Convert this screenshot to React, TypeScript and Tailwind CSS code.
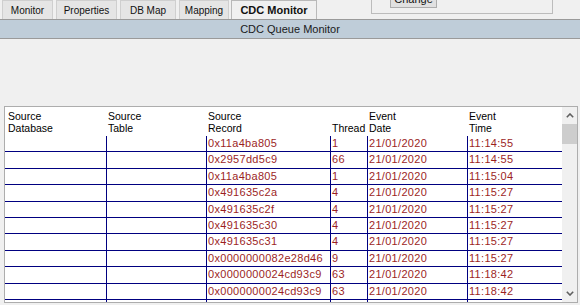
import React from "react"

type Row = { record: string; thread: string; date: string; time: string }

const ROWS: Row[] = [
  { record: "0x11a4ba805", thread: "1", date: "21/01/2020", time: "11:14:55" },
  { record: "0x2957dd5c9", thread: "66", date: "21/01/2020", time: "11:14:55" },
  { record: "0x11a4ba805", thread: "1", date: "21/01/2020", time: "11:15:04" },
  { record: "0x491635c2a", thread: "4", date: "21/01/2020", time: "11:15:27" },
  { record: "0x491635c2f", thread: "4", date: "21/01/2020", time: "11:15:27" },
  { record: "0x491635c30", thread: "4", date: "21/01/2020", time: "11:15:27" },
  { record: "0x491635c31", thread: "4", date: "21/01/2020", time: "11:15:27" },
  { record: "0x0000000082e28d46", thread: "9", date: "21/01/2020", time: "11:15:27" },
  { record: "0x0000000024cd93c9", thread: "63", date: "21/01/2020", time: "11:18:42" },
  { record: "0x0000000024cd93c9", thread: "63", date: "21/01/2020", time: "11:18:42" },
]

const COLS = "grid grid-cols-[101px_100px_124px_37px_100px_95px]"

function Chevron({ up }: { up?: boolean }) {
  return (
    <svg width="8" height="5" viewBox="0 0 8 5" className="text-[#606060]">
      <polyline
        points={up ? "0.8,4.2 4,1 7.2,4.2" : "0.8,0.8 4,4 7.2,0.8"}
        fill="none"
        stroke="currentColor"
        strokeWidth="1.6"
      />
    </svg>
  )
}

function Tab({ label, className }: { label: string; className: string }) {
  return (
    <div
      className={`h-[19px] flex items-center justify-center border-x border-t border-[#cfcfcf] bg-[#e5e5e5] text-[10px] text-[#111] ${className}`}
    >
      {label}
    </div>
  )
}

function HeaderCell({ lines, pl }: { lines: string[]; pl: string }) {
  return (
    <div className={`flex flex-col justify-end pb-[2px] leading-[12px] text-[10.5px] text-black ${pl}`}>
      {lines.map((l) => (
        <span key={l}>{l}</span>
      ))}
    </div>
  )
}

export default function App() {
  return (
    <div className="w-[580px] h-[305px] bg-[#f0f0f0] overflow-hidden flex flex-col font-['Liberation_Sans',Arial,sans-serif]">
      {/* Tab strip */}
      <div className="h-[19px] flex items-end shrink-0">
        <Tab label="Monitor" className="ml-[2px] w-[51px]" />
        <Tab label="Properties" className="ml-[3px] w-[61px]" />
        <Tab label="DB Map" className="ml-[3px] w-[56px]" />
        <Tab label="Mapping" className="ml-[3px] w-[50px]" />
        <div className="ml-[2px] w-[86px] h-[19px] flex items-center justify-center border-x border-t border-[#b9b9b9] bg-[#f0f0f0] text-[11px] font-bold text-[#111]">
          CDC Monitor
        </div>

        {/* Group box (cut off at top) */}
        <div className="ml-[54px] self-start w-[182px] h-[14px] border-x border-b border-[#bcbcbc] flex flex-col items-start overflow-hidden">
          <div className="ml-[18px] -mt-[9px] w-[47px] h-[17px] border border-[#adadad] bg-[#e1e1e1] flex items-center justify-center text-[11px] text-[#111]">
            Change
          </div>
        </div>
      </div>

      {/* Title bar */}
      <div className="h-[20px] shrink-0 border-y border-[#9a9a9a] bg-[#bfcdd9] flex items-center justify-center text-[11px] text-[#1a1a1a]">
        CDC Queue Monitor
      </div>

      {/* List */}
      <div className="mt-[67px] ml-[4px] w-[574px] h-[197px] shrink-0 border border-[#adadad] flex overflow-hidden">
        <div className="w-[557px] bg-white flex flex-col overflow-hidden">
          <div className={`${COLS} h-[29px] shrink-0`}>
            <HeaderCell lines={["Source", "Database"]} pl="pl-[3px]" />
            <HeaderCell lines={["Source", "Table"]} pl="pl-[2px]" />
            <HeaderCell lines={["Source", "Record"]} pl="pl-[2px]" />
            <HeaderCell lines={["Thread"]} pl="pl-[2px]" />
            <HeaderCell lines={["Event", "Date"]} pl="pl-[2px]" />
            <HeaderCell lines={["Event", "Time"]} pl="pl-[2px]" />
          </div>
          {ROWS.map((r, i) => (
            <div
              key={i}
              className={`${COLS} h-[16.4px] shrink-0 border-b border-[#000080] text-[11px] tracking-[0.3px] text-[#9c1f1f] leading-[15px]`}
            >
              <div className="pl-[3px]" />
              <div className="pl-[1px] border-l border-[#000080]" />
              <div className="pl-[1px] border-l border-[#000080] whitespace-nowrap overflow-hidden">{r.record}</div>
              <div className="pl-[1px] border-l border-[#000080]">{r.thread}</div>
              <div className="pl-[1px] border-l border-[#000080]">{r.date}</div>
              <div className="pl-[1px] border-l border-[#000080]">{r.time}</div>
            </div>
          ))}
          <div className={`${COLS} flex-1`}>
            <div />
            <div className="border-l border-[#000080]" />
            <div className="border-l border-[#000080]" />
            <div className="border-l border-[#000080]" />
            <div className="border-l border-[#000080]" />
            <div className="border-l border-[#000080]" />
          </div>
        </div>

        {/* Scrollbar */}
        <div className="w-[15px] bg-[#f0f0f0] flex flex-col">
          <div className="h-[17px] flex items-center justify-center">
            <Chevron up />
          </div>
          <div className="h-[20px] bg-[#cdcdcd]" />
          <div className="flex-1" />
          <div className="h-[17px] flex items-center justify-center">
            <Chevron />
          </div>
        </div>
      </div>
    </div>
  )
}
